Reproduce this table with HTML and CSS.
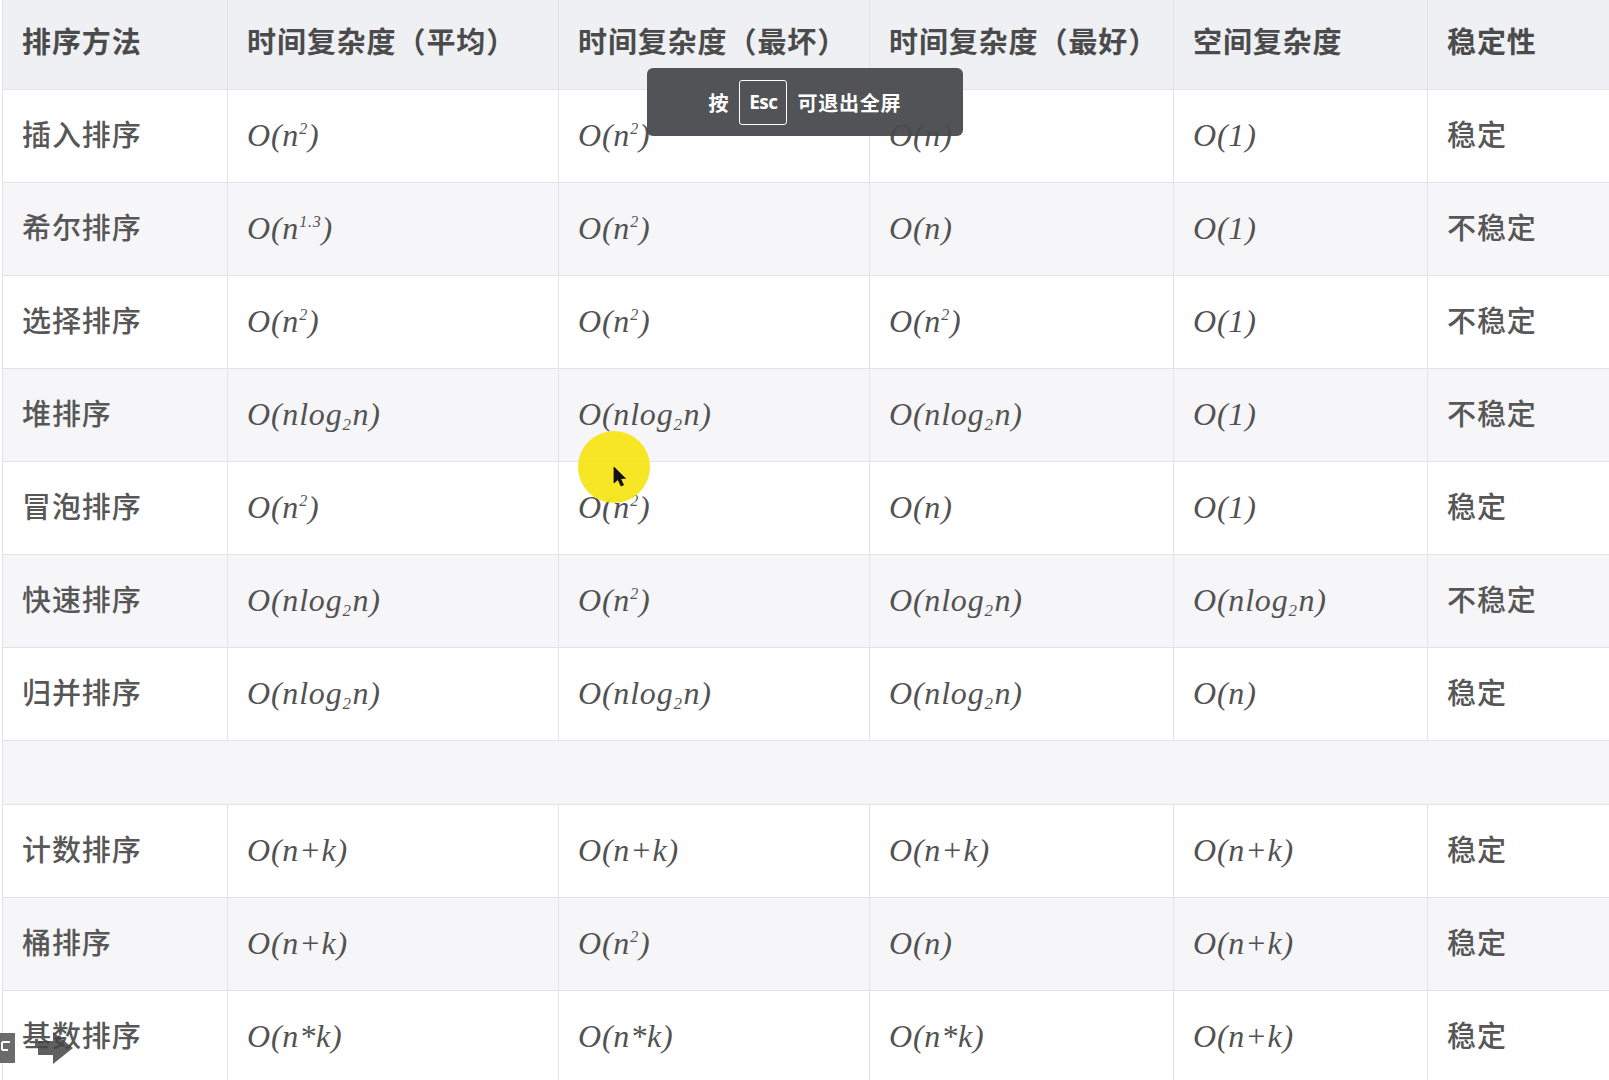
FILE: index.html
```html
<!DOCTYPE html>
<html lang="zh-CN">
<head>
<meta charset="utf-8">
<title>排序算法复杂度</title>
<link rel="stylesheet" href="styles.css">
</head>
<body>
<div class="page">
  <table class="sort-table">
    <colgroup>
      <col class="c1"><col class="c2"><col class="c3"><col class="c4"><col class="c5"><col class="c6">
    </colgroup>
    <thead>
      <tr>
        <th>排序方法</th>
        <th>时间复杂度（平均）</th>
        <th>时间复杂度（最坏）</th>
        <th>时间复杂度（最好）</th>
        <th>空间复杂度</th>
        <th>稳定性</th>
      </tr>
    </thead>
    <tbody>
      <tr>
        <td class="name">插入排序</td>
        <td><span class="m">O(n<sup class="sup">2</sup>)</span></td>
        <td><span class="m">O(n<sup class="sup">2</sup>)</span></td>
        <td><span class="m">O(n)</span></td>
        <td><span class="m">O(1)</span></td>
        <td class="name">稳定</td>
      </tr>
      <tr class="alt">
        <td class="name">希尔排序</td>
        <td><span class="m">O(n<sup class="sup">1.3</sup>)</span></td>
        <td><span class="m">O(n<sup class="sup">2</sup>)</span></td>
        <td><span class="m">O(n)</span></td>
        <td><span class="m">O(1)</span></td>
        <td class="name">不稳定</td>
      </tr>
      <tr>
        <td class="name">选择排序</td>
        <td><span class="m">O(n<sup class="sup">2</sup>)</span></td>
        <td><span class="m">O(n<sup class="sup">2</sup>)</span></td>
        <td><span class="m">O(n<sup class="sup">2</sup>)</span></td>
        <td><span class="m">O(1)</span></td>
        <td class="name">不稳定</td>
      </tr>
      <tr class="alt">
        <td class="name">堆排序</td>
        <td><span class="m">O(nlog<sub class="sub">2</sub>n)</span></td>
        <td><span class="m">O(nlog<sub class="sub">2</sub>n)</span></td>
        <td><span class="m">O(nlog<sub class="sub">2</sub>n)</span></td>
        <td><span class="m">O(1)</span></td>
        <td class="name">不稳定</td>
      </tr>
      <tr>
        <td class="name">冒泡排序</td>
        <td><span class="m">O(n<sup class="sup">2</sup>)</span></td>
        <td><span class="m">O(n<sup class="sup">2</sup>)</span></td>
        <td><span class="m">O(n)</span></td>
        <td><span class="m">O(1)</span></td>
        <td class="name">稳定</td>
      </tr>
      <tr class="alt">
        <td class="name">快速排序</td>
        <td><span class="m">O(nlog<sub class="sub">2</sub>n)</span></td>
        <td><span class="m">O(n<sup class="sup">2</sup>)</span></td>
        <td><span class="m">O(nlog<sub class="sub">2</sub>n)</span></td>
        <td><span class="m">O(nlog<sub class="sub">2</sub>n)</span></td>
        <td class="name">不稳定</td>
      </tr>
      <tr>
        <td class="name">归并排序</td>
        <td><span class="m">O(nlog<sub class="sub">2</sub>n)</span></td>
        <td><span class="m">O(nlog<sub class="sub">2</sub>n)</span></td>
        <td><span class="m">O(nlog<sub class="sub">2</sub>n)</span></td>
        <td><span class="m">O(n)</span></td>
        <td class="name">稳定</td>
      </tr>
      <tr class="alt blank">
        <td colspan="6"></td>
      </tr>
      <tr>
        <td class="name">计数排序</td>
        <td><span class="m">O(n+k)</span></td>
        <td><span class="m">O(n+k)</span></td>
        <td><span class="m">O(n+k)</span></td>
        <td><span class="m">O(n+k)</span></td>
        <td class="name">稳定</td>
      </tr>
      <tr class="alt">
        <td class="name">桶排序</td>
        <td><span class="m">O(n+k)</span></td>
        <td><span class="m">O(n<sup class="sup">2</sup>)</span></td>
        <td><span class="m">O(n)</span></td>
        <td><span class="m">O(n+k)</span></td>
        <td class="name">稳定</td>
      </tr>
      <tr>
        <td class="name">基数排序</td>
        <td><span class="m">O(n*k)</span></td>
        <td><span class="m">O(n*k)</span></td>
        <td><span class="m">O(n*k)</span></td>
        <td><span class="m">O(n+k)</span></td>
        <td class="name">稳定</td>
      </tr>
    </tbody>
  </table>

  <div class="toast">
    <span class="toast-text">按</span>
    <span class="key">Esc</span>
    <span class="toast-text">可退出全屏</span>
  </div>

  <div class="cursor-ring">
    <svg class="cursor-arrow" width="14" height="22" viewBox="0 0 14 22">
      <path d="M1 1 L1 17 L5 13.5 L8 20 L10.5 19 L7.6 12.6 L12.5 12.4 Z" fill="#111" stroke="#111" stroke-width="0.8" stroke-linejoin="round"/>
    </svg>
  </div>

  <svg class="corner-controls" width="80" height="48" viewBox="0 0 80 48">
    <rect x="0" y="5" width="15" height="30" fill="#6b6b6b"/>
    <path d="M2 14 H10 M2 14 V22 M2 22 H8" stroke="#fff" stroke-width="2" fill="none"/>
    <path d="M38 13 H53 V4 L73 20 L53 36 V27 H38 Z" fill="#444" fill-opacity="0.85"/>
  </svg>
</div>
</body>
</html>
```

FILE: styles.css
```css
html, body {
  margin: 0;
  padding: 0;
  background: #ffffff;
  overflow: hidden;
}

.page {
  position: relative;
  width: 1609px;
  height: 1080px;
  overflow: hidden;
  padding-left: 2px;
  box-sizing: border-box;
}

.sort-table {
  border-collapse: collapse;
  table-layout: fixed;
  width: 1700px;
  font-family: "Noto Sans CJK SC", "Noto Sans", sans-serif;
  color: #575757;
}

.c1 { width: 225px; }
.c2 { width: 331px; }
.c3 { width: 311px; }
.c4 { width: 304px; }
.c5 { width: 254px; }
.c6 { width: 275px; }

.sort-table th,
.sort-table td {
  border: 1px solid #e1e3e7;
  padding: 0 0 0 19px;
  text-align: left;
  vertical-align: middle;
  white-space: nowrap;
}

.sort-table thead tr {
  height: 89px;
}

.sort-table th {
  border-top: none;
  background: #eef0f3;
  font-size: 29px;
  letter-spacing: 0.9px;
  font-weight: 700;
  color: #4b4b4b;
  padding-bottom: 8px;
}

.sort-table tbody tr {
  height: 93px;
  background: #ffffff;
}

.sort-table tbody tr.alt {
  background: #f6f6f8;
}

.sort-table tbody tr.blank {
  height: 64px;
}

.sort-table td {
  font-size: 29px;
  letter-spacing: 0.9px;
  font-weight: 500;
  padding-bottom: 6px;
}

.m {
  font-family: "Liberation Serif", "Times New Roman", serif;
  font-style: italic;
  font-size: 32px;
  color: #525252;
  letter-spacing: 0.8px;
}

.sup {
  font-size: 16px;
  vertical-align: 12px;
  line-height: 0;
}

.sub {
  font-size: 17px;
  vertical-align: -5px;
  line-height: 0;
  letter-spacing: 1.5px;
}

.toast {
  position: absolute;
  left: 647px;
  top: 68px;
  width: 316px;
  height: 68px;
  border-radius: 6px;
  background: rgba(72, 74, 78, 0.95);
  display: flex;
  align-items: center;
  justify-content: center;
  gap: 10px;
  font-family: "Noto Sans CJK SC", "Noto Sans", sans-serif;
  font-weight: 700;
  color: #ffffff;
}

.toast-text {
  font-size: 20px;
  letter-spacing: 0.8px;
}

.key {
  display: flex;
  align-items: center;
  justify-content: center;
  width: 46px;
  height: 43px;
  border: 1px solid #ffffff;
  border-radius: 3px;
  font-family: "Open Sans", "Noto Sans", sans-serif;
  font-size: 19px;
  font-weight: 700;
  letter-spacing: -0.5px;
}

.cursor-ring {
  position: absolute;
  left: 578px;
  top: 431px;
  width: 72px;
  height: 72px;
  border-radius: 50%;
  background: rgba(246, 228, 20, 0.92);
}

.cursor-arrow {
  position: absolute;
  left: 35px;
  top: 35px;
}

.corner-controls {
  position: absolute;
  left: 0;
  top: 1028px;
}
```
